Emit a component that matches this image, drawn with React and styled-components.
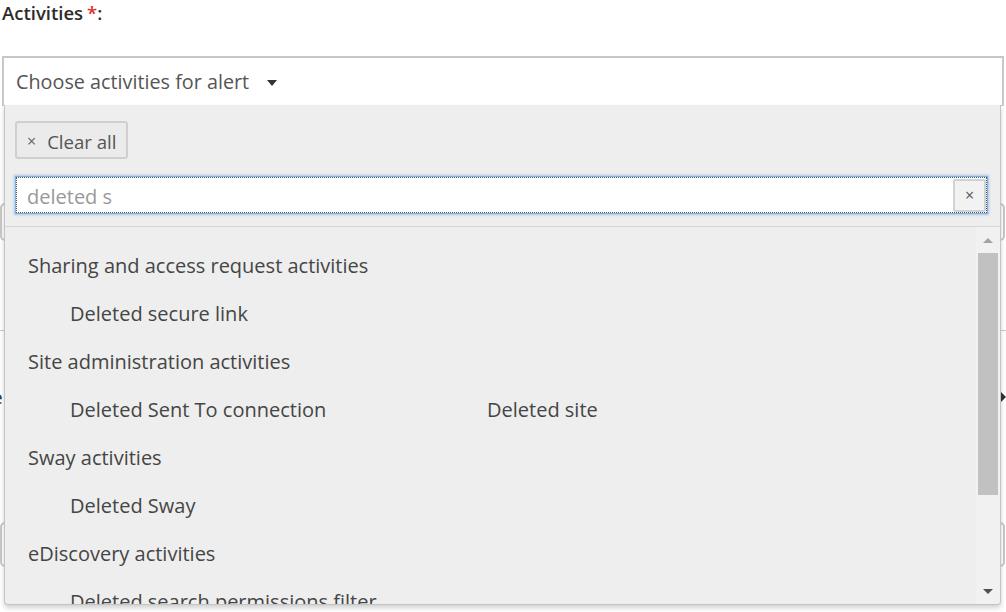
import React from "react";
import styled, { createGlobalStyle } from "styled-components";

const Global = createGlobalStyle`
  html, body { margin: 0; padding: 0; background: #fff; }
  body { font-family: "Open Sans", "Noto Sans", sans-serif; color: #333; }
  * { box-sizing: border-box; }
`;

const Page = styled.div`
  position: relative;
  width: 1006px;
  height: 612px;
  overflow: hidden;
`;

const Label = styled.div`
  padding: 0 0 0 2px;
  height: 25px;
  font-size: 18.5px;
  font-weight: 600;
  color: #2b2b2b;
  line-height: 25px;
`;

const Star = styled.span`
  color: #d9302c;
  margin-left: 4px;
`;

const SelectBox = styled.div`
  margin: 31px 2px 0 2px;
  height: 50px;
  border: 2px solid #c8c8c8;
  border-bottom-width: 1px;
  background: #fff;
  display: flex;
  align-items: center;
  padding-left: 12px;
  gap: 18px;
  font-size: 19.8px;
  color: #555;
`;

const Caret = styled.span`
  width: 0;
  height: 0;
  border-left: 5.5px solid transparent;
  border-right: 5.5px solid transparent;
  border-top: 6px solid #333;
  margin-top: 3px;
`;

const Under = styled.div`
  display: flex;
  flex-direction: column;
`;

const UnderBox = styled.div`
  margin-top: ${(p) => p.$top}px;
  height: ${(p) => p.$h}px;
  margin-right: 1px;
  border: 2px solid #c8c8c8;
  border-radius: 5px;
`;

const UnderLine = styled.div`
  margin-top: ${(p) => p.$top}px;
  height: 1px;
  background: #c8c8c8;
`;

const UnderRow = styled.div`
  margin-top: ${(p) => p.$top}px;
  display: flex;
  justify-content: space-between;
  align-items: center;
  height: 20px;
  font-size: 19px;
  color: #333;
`;

const UnderText = styled.span`
  margin-left: -8px;
`;

const UnderArrow = styled.span`
  width: 0;
  height: 0;
  border-top: 5px solid transparent;
  border-bottom: 5px solid transparent;
  border-left: 5px solid #333;
`;

const Dropdown = styled.div`
  position: absolute;
  left: 4px;
  top: 105px;
  width: 997px;
  height: 500px;
  background: #eeeeee;
  border: 1px solid #c4c4c4;
  border-top: none;
  border-radius: 0 0 4px 4px;
  box-shadow: 0 3px 5px rgba(0, 0, 0, 0.18);
  display: flex;
  flex-direction: column;
  overflow: hidden;
`;

const Header = styled.div`
  padding: 16px 12px 12px 10px;
  border-bottom: 1px solid #d6d6d6;
  display: flex;
  flex-direction: column;
  align-items: flex-start;
  gap: 17px;
`;

const ClearAll = styled.button`
  height: 38px;
  width: 113px;
  border: 2px solid #cfcfcf;
  border-radius: 3px;
  background: #ebebeb;
  font-family: inherit;
  font-size: 18.6px;
  color: #555;
  display: flex;
  align-items: center;
  gap: 11px;
  padding: 2px 0 0 10px;
`;

const Times = styled.span`
  font-size: 16px;
  color: #666;
`;

const Search = styled.div`
  width: 973px;
  height: 38px;
  background: #fff;
  border: 1px solid #7ab0e3;
  box-shadow: 0 0 2px 1px rgba(110, 165, 225, 0.55);
  outline: 1px dotted #555;
  outline-offset: -2px;
  display: flex;
  align-items: center;
  justify-content: space-between;
  padding: 0 1px 0 11px;
  font-size: 20px;
  color: #999;
`;

const SearchText = styled.span`
  padding-top: 3px;
`;

const SearchClear = styled.span`
  width: 33px;
  height: 33px;
  border: 2px solid #d2d2d2;
  border-radius: 2px;
  background: #f2f2f2;
  display: flex;
  align-items: center;
  justify-content: center;
  font-size: 16px;
  color: #555;
`;

const Body = styled.div`
  flex: 1;
  display: flex;
  min-height: 0;
`;

const List = styled.div`
  flex: 1;
  padding-top: 14px;
  overflow: hidden;
`;

const Group = styled.div`
  height: 48px;
  display: flex;
  align-items: center;
  padding-left: 23px;
  font-size: 20px;
  color: #454545;
`;

const Items = styled.div`
  display: grid;
  grid-template-columns: repeat(2, 417px);
  padding-left: 65px;
`;

const Item = styled.div`
  height: 48px;
  display: flex;
  align-items: center;
  font-size: 20px;
  color: #454545;
`;

const Scrollbar = styled.div`
  width: 24px;
  background: #f1f1f1;
  display: flex;
  flex-direction: column;
  align-items: center;
`;

const ArrowBtn = styled.div`
  height: 26px;
  width: 100%;
  display: flex;
  align-items: center;
  justify-content: center;
`;

const TriUp = styled.span`
  width: 0;
  height: 0;
  border-left: 5px solid transparent;
  border-right: 5px solid transparent;
  border-bottom: 5px solid #a3a3a3;
`;

const TriDown = styled.span`
  width: 0;
  height: 0;
  border-left: 5px solid transparent;
  border-right: 5px solid transparent;
  border-top: 5px solid #505050;
`;

const Track = styled.div`
  flex: 1;
  width: 100%;
  padding: 0 2px;
`;

const Thumb = styled.div`
  height: 242px;
  background: #c1c1c1;
`;

const groups = [
  { name: "Sharing and access request activities", items: ["Deleted secure link"] },
  { name: "Site administration activities", items: ["Deleted Sent To connection", "Deleted site"] },
  { name: "Sway activities", items: ["Deleted Sway"] },
  { name: "eDiscovery activities", items: ["Deleted search permissions filter"] },
];

export default function App() {
  return (
    <Page>
      <Global />
      <Label>
        Activities<Star>*</Star>:
      </Label>
      <SelectBox>
        Choose activities for alert
        <Caret />
      </SelectBox>
      <Under>
        <UnderBox $top={97} $h={38} />
        <UnderLine $top={89} />
        <UnderRow $top={56}>
          <UnderText>e</UnderText>
          <UnderArrow />
        </UnderRow>
        <UnderBox $top={115} $h={45} />
      </Under>
      <Dropdown>
        <Header>
          <ClearAll>
            <Times>×</Times>Clear all
          </ClearAll>
          <Search>
            <SearchText>deleted s</SearchText>
            <SearchClear>×</SearchClear>
          </Search>
        </Header>
        <Body>
          <List>
            {groups.map((g) => (
              <React.Fragment key={g.name}>
                <Group>{g.name}</Group>
                <Items>
                  {g.items.map((it) => (
                    <Item key={it}>{it}</Item>
                  ))}
                </Items>
              </React.Fragment>
            ))}
          </List>
          <Scrollbar>
            <ArrowBtn>
              <TriUp />
            </ArrowBtn>
            <Track>
              <Thumb />
            </Track>
            <ArrowBtn>
              <TriDown />
            </ArrowBtn>
          </Scrollbar>
        </Body>
      </Dropdown>
    </Page>
  );
}
